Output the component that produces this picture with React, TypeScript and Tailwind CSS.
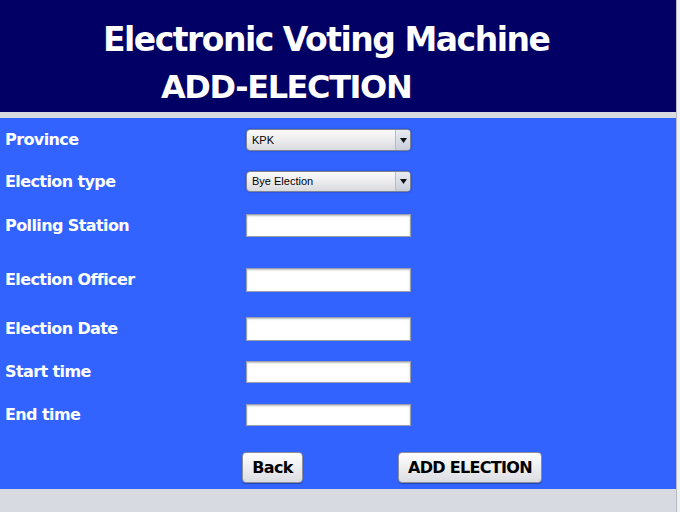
const labelFont = { fontFamily: '"DejaVu Sans", Verdana, sans-serif' };

const Select = ({ value }: { value: string }) => (
    <div className="relative w-[165px] h-full rounded-[4px] border border-[#7f8493] bg-gradient-to-b from-[#fbfbfb] via-[#ececee] to-[#d9dade] shadow-[0_0_2px_rgba(0,0,0,0.35)] flex items-center">
        <span className="pl-[5px] text-[11px] text-black font-['Liberation_Sans',Arial,sans-serif]">{value}</span>
        <div className="absolute right-0 top-0 bottom-0 w-[15px] border-l border-[#b8bcc8] bg-gradient-to-b from-[#e8ebf2] to-[#c9ced9] rounded-r-[3px] flex items-center justify-center">
            <svg width="7" height="5" viewBox="0 0 7 5">
                <path d="M0 0h7L3.5 5z" fill="#111" />
            </svg>
        </div>
    </div>
);

const TextBox = () => (
    <div className="w-[165px] h-full bg-white border border-[#9aa0ad] shadow-[inset_0_1px_2px_rgba(0,0,0,0.25)]" />
);

const rows: { label: string; kind: 'select' | 'input'; value?: string; mt: string; h: string }[] = [
    { label: 'Province', kind: 'select', value: 'KPK', mt: 'mt-[11px]', h: 'h-[22px]' },
    { label: 'Election type', kind: 'select', value: 'Bye Election', mt: 'mt-[20px]', h: 'h-[21px]' },
    { label: 'Polling Station', kind: 'input', mt: 'mt-[22px]', h: 'h-[23px]' },
    { label: 'Election Officer', kind: 'input', mt: 'mt-[31px]', h: 'h-[24px]' },
    { label: 'Election Date', kind: 'input', mt: 'mt-[25px]', h: 'h-[24px]' },
    { label: 'Start time', kind: 'input', mt: 'mt-[20px]', h: 'h-[22px]' },
    { label: 'End time', kind: 'input', mt: 'mt-[21px]', h: 'h-[22px]' },
];

const App = () => {
    return (
        <div className="w-[680px] h-[512px] flex overflow-hidden bg-[#d7dae1]">
            <div className="w-[676px] flex flex-col">
                <div className="h-[112px] bg-[#020064] flex flex-col" style={labelFont}>
                    <h1 className="pl-[103px] pt-[20px] text-[33px] leading-[40px] font-bold text-white tracking-[-1.5px]">
                        Electronic Voting Machine
                    </h1>
                    <h2 className="pl-[161px] pt-[8px] text-[32px] leading-[38px] font-bold text-white tracking-[-1.4px]">
                        ADD-ELECTION
                    </h2>
                </div>
                <div className="h-[6px] bg-[#d7dae1]" />
                <div className="h-[371px] bg-[#3363fe] flex flex-col" style={labelFont}>
                    {rows.map((r) => (
                        <div key={r.label} className={`flex items-center ${r.mt} ${r.h}`}>
                            <span className="w-[246px] pl-[5px] text-[16px] font-bold text-white tracking-[-0.6px]">
                                {r.label}
                            </span>
                            {r.kind === 'select' ? <Select value={r.value ?? ''} /> : <TextBox />}
                        </div>
                    ))}
                    <div className="flex mt-[26px] h-[31px]">
                        <button className="ml-[242px] w-[61px] rounded-[4px] border border-[#8c8f98] bg-gradient-to-b from-white to-[#dcdde2] text-[16px] font-bold text-black tracking-[-0.6px] shadow-[0_1px_1px_rgba(0,0,0,0.3)]">
                            Back
                        </button>
                        <button className="ml-[95px] w-[144px] rounded-[4px] border border-[#8c8f98] bg-gradient-to-b from-white to-[#dcdde2] text-[16px] font-bold text-black tracking-[-0.7px] shadow-[0_1px_1px_rgba(0,0,0,0.3)]">
                            ADD ELECTION
                        </button>
                    </div>
                </div>
                <div className="flex-1 bg-[#d7dae1]" />
            </div>
            <div className="w-[4px] bg-[#eef0f4] border-l border-[#b9bcc4]" />
        </div>
    );
};

export default App;
